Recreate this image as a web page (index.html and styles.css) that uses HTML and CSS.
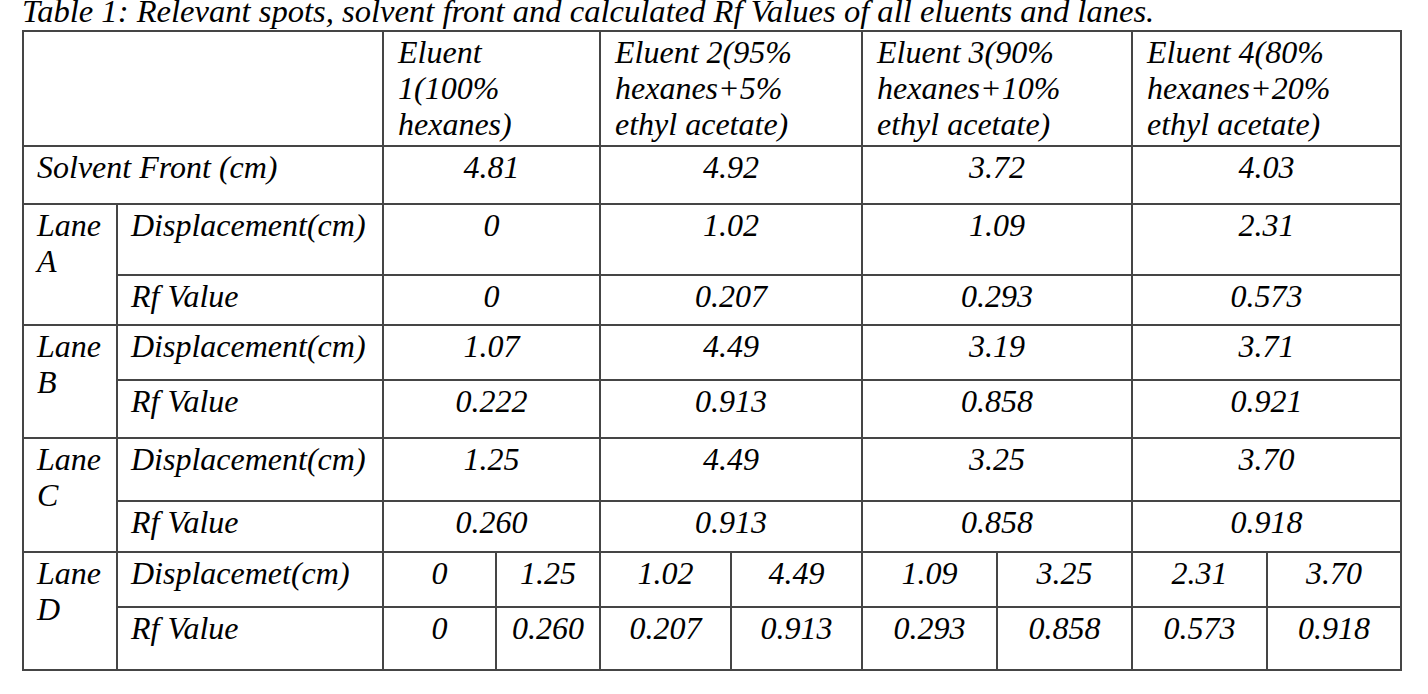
FILE: index.html
```html
<!DOCTYPE html>
<html lang="en">
<head>
    <meta charset="UTF-8">
    <title>Table 1 - Rf Values</title>
    <link rel="stylesheet" href="styles.css">
</head>
<body>
    <p class="caption">Table 1: Relevant spots, solvent front and calculated Rf Values of all eluents and lanes.</p>

    <table class="rf-table">
        <colgroup>
            <col class="c-lane">
            <col class="c-label">
            <col class="c-e1a"><col class="c-e1b">
            <col class="c-e2a"><col class="c-e2b">
            <col class="c-e3a"><col class="c-e3b">
            <col class="c-e4a"><col class="c-e4b">
        </colgroup>
        <tr class="r-head">
            <td colspan="2"></td>
            <td colspan="2" class="head">Eluent<br>1(100%<br>hexanes)</td>
            <td colspan="2" class="head">Eluent 2(95%<br>hexanes+5%<br>ethyl acetate)</td>
            <td colspan="2" class="head">Eluent 3(90%<br>hexanes+10%<br>ethyl acetate)</td>
            <td colspan="2" class="head">Eluent 4(80%<br>hexanes+20%<br>ethyl acetate)</td>
        </tr>
        <tr class="r-front">
            <td colspan="2" class="label">Solvent Front (cm)</td>
            <td colspan="2" class="num">4.81</td>
            <td colspan="2" class="num">4.92</td>
            <td colspan="2" class="num">3.72</td>
            <td colspan="2" class="num">4.03</td>
        </tr>

        <!-- Lane A -->
        <tr class="r-a1">
            <td rowspan="2" class="label">Lane A</td>
            <td class="label">Displacement(cm)</td>
            <td colspan="2" class="num">0</td>
            <td colspan="2" class="num">1.02</td>
            <td colspan="2" class="num">1.09</td>
            <td colspan="2" class="num">2.31</td>
        </tr>
        <tr class="r-a2">
            <td class="label">Rf Value</td>
            <td colspan="2" class="num">0</td>
            <td colspan="2" class="num">0.207</td>
            <td colspan="2" class="num">0.293</td>
            <td colspan="2" class="num">0.573</td>
        </tr>

        <!-- Lane B -->
        <tr class="r-b1">
            <td rowspan="2" class="label">Lane B</td>
            <td class="label">Displacement(cm)</td>
            <td colspan="2" class="num">1.07</td>
            <td colspan="2" class="num">4.49</td>
            <td colspan="2" class="num">3.19</td>
            <td colspan="2" class="num">3.71</td>
        </tr>
        <tr class="r-b2">
            <td class="label">Rf Value</td>
            <td colspan="2" class="num">0.222</td>
            <td colspan="2" class="num">0.913</td>
            <td colspan="2" class="num">0.858</td>
            <td colspan="2" class="num">0.921</td>
        </tr>

        <!-- Lane C -->
        <tr class="r-c1">
            <td rowspan="2" class="label">Lane C</td>
            <td class="label">Displacement(cm)</td>
            <td colspan="2" class="num">1.25</td>
            <td colspan="2" class="num">4.49</td>
            <td colspan="2" class="num">3.25</td>
            <td colspan="2" class="num">3.70</td>
        </tr>
        <tr class="r-c2">
            <td class="label">Rf Value</td>
            <td colspan="2" class="num">0.260</td>
            <td colspan="2" class="num">0.913</td>
            <td colspan="2" class="num">0.858</td>
            <td colspan="2" class="num">0.918</td>
        </tr>

        <!-- Lane D: two spots per eluent -->
        <tr class="r-d1">
            <td rowspan="2" class="label">Lane D</td>
            <td class="label">Displacemet(cm)</td>
            <td class="num">0</td>
            <td class="num">1.25</td>
            <td class="num">1.02</td>
            <td class="num">4.49</td>
            <td class="num">1.09</td>
            <td class="num">3.25</td>
            <td class="num">2.31</td>
            <td class="num">3.70</td>
        </tr>
        <tr class="r-d2">
            <td class="label">Rf Value</td>
            <td class="num">0</td>
            <td class="num">0.260</td>
            <td class="num">0.207</td>
            <td class="num">0.913</td>
            <td class="num">0.293</td>
            <td class="num">0.858</td>
            <td class="num">0.573</td>
            <td class="num">0.918</td>
        </tr>
    </table>
</body>
</html>
```

FILE: styles.css
```css
* {
    margin: 0;
    padding: 0;
    box-sizing: border-box;
}

body {
    font-family: 'Liberation Serif', 'Times New Roman', serif;
    font-style: italic;
    font-size: 32px;
    color: #000;
    background: #fff;
}

.caption {
    font-size: 32.6px;
    line-height: 22px;
    padding-left: 22px;
    margin-bottom: 8px;
    white-space: nowrap;
}

.rf-table {
    margin-left: 22px;
    width: 1380px;
    table-layout: fixed;
    border-collapse: separate;
    border-spacing: 0;
    border-top: 2px solid #454545;
    border-left: 2px solid #454545;
}

.rf-table td {
    border-right: 2px solid #454545;
    border-bottom: 2px solid #454545;
    vertical-align: top;
    line-height: 36px;
    padding: 2px 12px 0 13px;
}

.c-lane { width: 94px; }
.c-label { width: 266px; }
.c-e1a { width: 113px; }
.c-e1b { width: 104px; }
.c-e2a, .c-e2b { width: 131px; }
.c-e3a, .c-e3b, .c-e4a { width: 135px; }
.c-e4b { width: 134px; }

.rf-table td.head {
    padding-left: 14px;
}

.rf-table td.num {
    text-align: center;
    padding-left: 6px;
    padding-right: 6px;
}

.r-head { height: 115px; }
.r-front { height: 58px; }
.r-a1 { height: 71px; }
.r-a2 { height: 50px; }
.r-b1 { height: 55px; }
.r-b2 { height: 58px; }
.r-c1 { height: 63px; }
.r-c2 { height: 51px; }
.r-d1 { height: 55px; }
.r-d2 { height: 63px; }
```
